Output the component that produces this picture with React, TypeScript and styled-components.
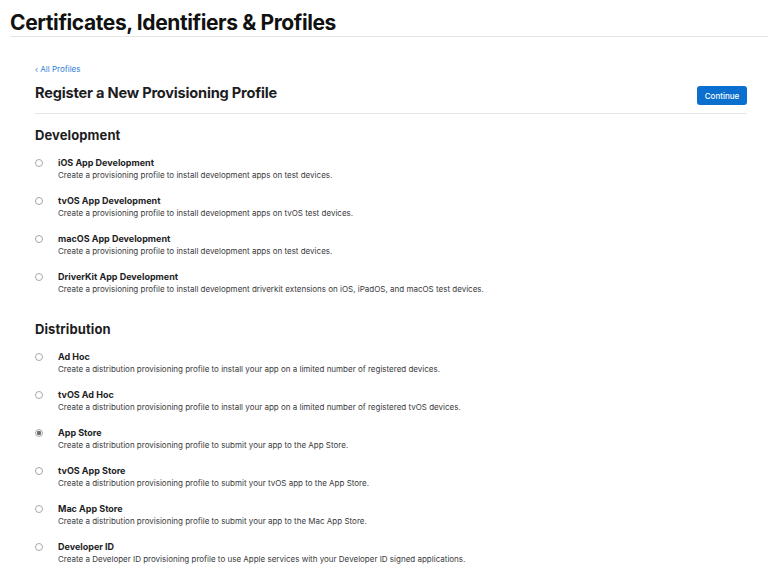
import React from "react";
import styled, { createGlobalStyle } from "styled-components";

const Global = createGlobalStyle`
  html, body { margin: 0; padding: 0; background: #fff; }
  body { font-family: Inter, "Noto Sans", sans-serif; color: #1d1d1f; }
`;

const Page = styled.div`
  width: 768px;
  height: 567px;
  overflow: hidden;
`;

const Header = styled.header`
  margin-left: 10px;
  padding-top: 10px;
  padding-bottom: 0;
  border-bottom: 1px solid #e5e5e5;
`;

const SiteTitle = styled.h1`
  margin: 0;
  font-size: 21px;
  line-height: 26px;
  font-weight: 700;
  letter-spacing: -0.4px;
  color: #111;
`;

const Main = styled.main`
  padding: 26px 21px 0 35px;
`;

const BackLink = styled.a`
  display: block;
  font-size: 8px;
  line-height: 12px;
  color: #2f7fd6;
  text-decoration: none;
`;

const TitleBar = styled.div`
  display: flex;
  justify-content: space-between;
  align-items: flex-end;
  padding-bottom: 8px;
  border-bottom: 1px solid #e8e8e8;
`;

const PageTitle = styled.h2`
  margin: 8px 0 2px;
  font-size: 14.6px;
  line-height: 20px;
  font-weight: 700;
  letter-spacing: -0.2px;
  color: #1d1d1f;
`;

const Button = styled.button`
  width: 50px;
  height: 19px;
  border: none;
  border-radius: 3px;
  background: #0a6fce;
  color: #fff;
  font-family: Inter, sans-serif;
  font-size: 8px;
  font-weight: 500;
  padding: 0;
`;

const SectionTitle = styled.h3`
  margin: 13px 0 13px;
  font-size: 13px;
  line-height: 17px;
  font-weight: 700;
  letter-spacing: 0.1px;
  color: #1d1d1f;
`;

const Section = styled.section<{ $gap?: number }>`
  margin-top: ${(p) => p.$gap ?? 0}px;
`;

const List = styled.div`
  display: flex;
  flex-direction: column;
  gap: 14px;
`;

const Row = styled.label`
  display: grid;
  grid-template-columns: 23px 1fr;
  align-items: start;
`;

const Radio = styled.span<{ $checked?: boolean }>`
  width: 8px;
  height: 8px;
  margin-top: 1.5px;
  border-radius: 50%;
  border: 1px solid #a8a8a8;
  box-sizing: border-box;
  background: ${(p) => (p.$checked ? "radial-gradient(circle, #6e6e6e 0 2px, #fff 2.4px)" : "#fff")};
`;

const ItemTitle = styled.div`
  font-size: 9px;
  line-height: 12px;
  font-weight: 700;
  color: #1d1d1f;
`;

const ItemDesc = styled.div`
  font-size: 8px;
  line-height: 12px;
  color: #3a3a3c;
`;

type Item = { title: string; desc: string; checked?: boolean };

const dev: Item[] = [
  { title: "iOS App Development", desc: "Create a provisioning profile to install development apps on test devices." },
  { title: "tvOS App Development", desc: "Create a provisioning profile to install development apps on tvOS test devices." },
  { title: "macOS App Development", desc: "Create a provisioning profile to install development apps on test devices." },
  { title: "DriverKit App Development", desc: "Create a provisioning profile to install development driverkit extensions on iOS, iPadOS, and macOS test devices." },
];

const dist: Item[] = [
  { title: "Ad Hoc", desc: "Create a distribution provisioning profile to install your app on a limited number of registered devices." },
  { title: "tvOS Ad Hoc", desc: "Create a distribution provisioning profile to install your app on a limited number of registered tvOS devices." },
  { title: "App Store", desc: "Create a distribution provisioning profile to submit your app to the App Store.", checked: true },
  { title: "tvOS App Store", desc: "Create a distribution provisioning profile to submit your tvOS app to the App Store." },
  { title: "Mac App Store", desc: "Create a distribution provisioning profile to submit your app to the Mac App Store." },
  { title: "Developer ID", desc: "Create a Developer ID provisioning profile to use Apple services with your Developer ID signed applications." },
];

const Options = ({ items }: { items: Item[] }) => (
  <List>
    {items.map((it) => (
      <Row key={it.title}>
        <Radio $checked={it.checked} />
        <div>
          <ItemTitle>{it.title}</ItemTitle>
          <ItemDesc>{it.desc}</ItemDesc>
        </div>
      </Row>
    ))}
  </List>
);

export default function App() {
  return (
    <Page>
      <Global />
      <Header>
        <SiteTitle>Certificates, Identifiers &amp; Profiles</SiteTitle>
      </Header>
      <Main>
        <BackLink href="#">‹ All Profiles</BackLink>
        <TitleBar>
          <PageTitle>Register a New Provisioning Profile</PageTitle>
          <Button>Continue</Button>
        </TitleBar>
        <Section>
          <SectionTitle>Development</SectionTitle>
          <Options items={dev} />
        </Section>
        <Section $gap={26}>
          <SectionTitle>Distribution</SectionTitle>
          <Options items={dist} />
        </Section>
      </Main>
    </Page>
  );
}
